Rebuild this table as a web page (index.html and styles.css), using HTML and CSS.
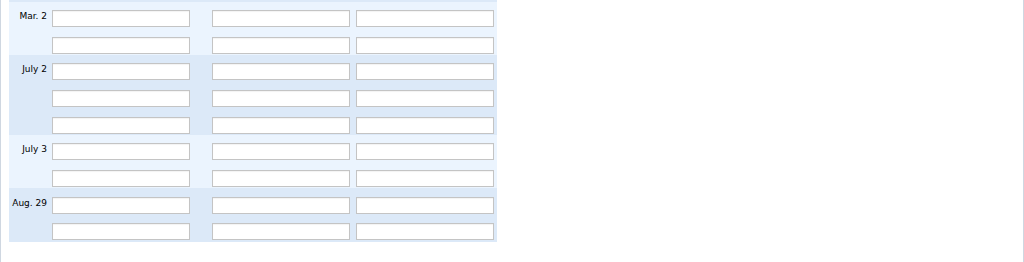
FILE: index.html
```html
<!DOCTYPE html>
<html lang="en">
<head>
    <meta charset="UTF-8">
    <meta name="viewport" content="width=device-width, initial-scale=1.0">
    <title>Schedule Entries</title>
    <link rel="stylesheet" href="styles.css">
</head>
<body>
    <div class="panel">
        <div class="entries">
            <div class="group dark lead">
                <div class="row">
                    <div class="date"></div>
                    <input type="text" class="cell first">
                    <input type="text" class="cell second">
                    <input type="text" class="cell third">
                </div>
            </div>

            <div class="group light">
                <div class="row">
                    <div class="date">Mar. 2</div>
                    <input type="text" class="cell first">
                    <input type="text" class="cell second">
                    <input type="text" class="cell third">
                </div>
                <div class="row">
                    <div class="date"></div>
                    <input type="text" class="cell first">
                    <input type="text" class="cell second">
                    <input type="text" class="cell third">
                </div>
            </div>

            <div class="group dark">
                <div class="row">
                    <div class="date">July 2</div>
                    <input type="text" class="cell first">
                    <input type="text" class="cell second">
                    <input type="text" class="cell third">
                </div>
                <div class="row">
                    <div class="date"></div>
                    <input type="text" class="cell first">
                    <input type="text" class="cell second">
                    <input type="text" class="cell third">
                </div>
                <div class="row">
                    <div class="date"></div>
                    <input type="text" class="cell first">
                    <input type="text" class="cell second">
                    <input type="text" class="cell third">
                </div>
            </div>

            <div class="group light">
                <div class="row">
                    <div class="date">July 3</div>
                    <input type="text" class="cell first">
                    <input type="text" class="cell second">
                    <input type="text" class="cell third">
                </div>
                <div class="row">
                    <div class="date"></div>
                    <input type="text" class="cell first">
                    <input type="text" class="cell second">
                    <input type="text" class="cell third">
                </div>
            </div>

            <div class="group dark">
                <div class="row">
                    <div class="date">Aug. 29</div>
                    <input type="text" class="cell first">
                    <input type="text" class="cell second">
                    <input type="text" class="cell third">
                </div>
                <div class="row">
                    <div class="date"></div>
                    <input type="text" class="cell first">
                    <input type="text" class="cell second">
                    <input type="text" class="cell third">
                </div>
            </div>
        </div>
    </div>
</body>
</html>
```

FILE: styles.css
```css
body {
    margin: 0;
    font-family: 'DejaVu Sans', Verdana, sans-serif;
    font-size: 9px;
    color: #000;
    background-color: #fff;
}
.panel {
    min-height: 100vh;
    box-sizing: border-box;
    border-left: 1px solid #cfd7e1;
    border-right: 1px solid #cfd7e1;
    padding-left: 8px;
    overflow: hidden;
}
.entries {
    width: 488px;
}
.group.lead {
    margin-top: -25px;
}
.group.light {
    background-color: #ebf4fe;
}
.group.dark {
    background-color: #dce9f8;
}
.row {
    display: flex;
    align-items: flex-start;
    height: 26.667px;
}
.date {
    width: 38px;
    padding-right: 5px;
    padding-top: 9.3px;
    line-height: 11px;
    text-align: right;
    white-space: nowrap;
}
.cell {
    box-sizing: border-box;
    width: 138px;
    height: 17px;
    margin: 8.333px 0 0 0;
    padding: 0 3px;
    border: 1px solid #c4c4c4;
    border-radius: 0;
    background-color: #fff;
    box-shadow: inset 0 1px 1px rgba(0,0,0,0.05);
    font-family: inherit;
    font-size: 10px;
}
.cell.second {
    margin-left: 22px;
}
.cell.third {
    margin-left: 6px;
}
```
